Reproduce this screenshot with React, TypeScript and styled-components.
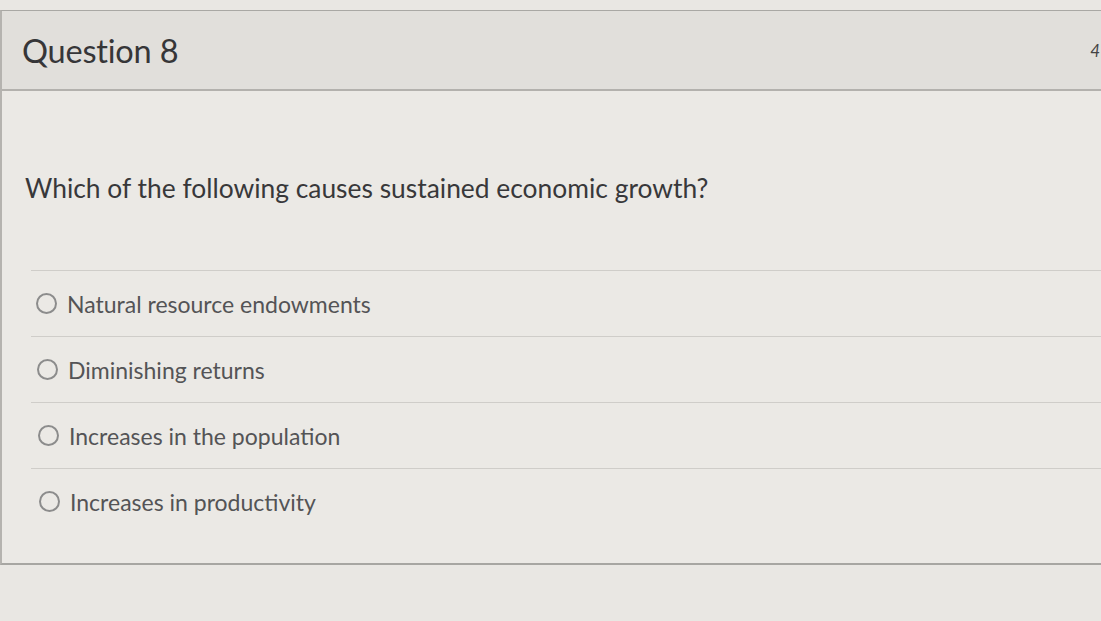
import React from "react";
import styled, { createGlobalStyle } from "styled-components";

const Global = createGlobalStyle`
  html, body { margin: 0; padding: 0; }
  body {
    background: #e9e7e3;
    font-family: Lato, "Noto Sans", sans-serif;
    overflow: hidden;
    width: 1101px;
    height: 621px;
  }
`;

const Page = styled.div`
  padding-top: 10px;
  width: 1101px;
  height: 621px;
  box-sizing: border-box;
  overflow: hidden;
`;

const Card = styled.div`
  width: 1101px;
  border-top: 1px solid #a9a8a4;
  border-left: 2px solid #b5b3af;
  border-bottom: 2px solid #a7a6a2;
  background: #ebe9e5;
  height: 555px;
  box-sizing: border-box;
`;

const Header = styled.div`
  height: 80px;
  background: #e1dfdb;
  border-bottom: 2px solid #b3b1ad;
  box-sizing: border-box;
  display: flex;
  align-items: center;
  padding: 0 1px 0 20px;
`;

const Title = styled.h2`
  margin: 0;
  font-size: 32.5px;
  font-weight: 400;
  color: #363638;
  letter-spacing: -0.2px;
`;

const Points = styled.span`
  margin-left: auto;
  font-size: 17px;
  color: #444;
  font-style: italic;
`;

const Body = styled.div`
  padding: 0 0 0 23px;
`;

const QuestionText = styled.p`
  margin: 79px 0 0;
  font-size: 26.4px;
  line-height: 36px;
  color: #38383a;
`;

const Answers = styled.div`
  margin: 64px 0 0 6px;
  border-top: 1px solid #cfcdc9;
`;

const Answer = styled.label<{ $indent: number; $last?: boolean }>`
  display: flex;
  align-items: center;
  gap: 10px;
  height: 65px;
  padding-left: ${(p) => p.$indent}px;
  border-bottom: ${(p) => (p.$last ? "none" : "1px solid #cfcdc9")};
  font-size: 23px;
  color: #545456;
`;

const Radio = styled.span`
  width: 17px;
  height: 17px;
  border: 2px solid #8c8c8c;
  border-radius: 50%;
  flex: none;
  box-sizing: content-box;
`;

const options = [
  "Natural resource endowments",
  "Diminishing returns",
  "Increases in the population",
  "Increases in productivity",
];

export default function App() {
  return (
    <>
      <Global />
      <Page>
        <Card>
          <Header>
            <Title>Question 8</Title>
            <Points>4</Points>
          </Header>
          <Body>
            <QuestionText>Which of the following causes sustained economic growth?</QuestionText>
            <Answers>
              {options.map((o, i) => (
                <Answer key={o} $indent={5 + i} $last={i === options.length - 1}>
                  <Radio />
                  {o}
                </Answer>
              ))}
            </Answers>
          </Body>
        </Card>
      </Page>
    </>
  );
}
